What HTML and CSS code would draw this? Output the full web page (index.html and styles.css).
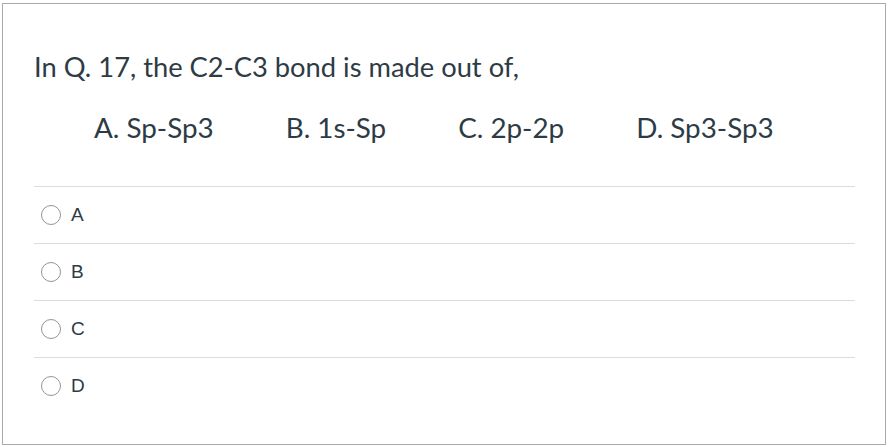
FILE: index.html
```html
<!DOCTYPE html>
<html>
<head>
<meta charset="utf-8">
<link rel="stylesheet" href="styles.css">
</head>
<body>
<div class="question">
  <div class="text">
    <p class="stem">In Q. 17, the C2-C3 bond is made out of,</p>
    <p class="choices"><span>A. Sp-Sp3</span><span>B. 1s-Sp</span><span>C. 2p-2p</span><span>D. Sp3-Sp3</span></p>
  </div>
  <div class="answers">
    <label class="answer"><span class="radio"></span><span class="lbl">A</span></label>
    <label class="answer"><span class="radio"></span><span class="lbl">B</span></label>
    <label class="answer"><span class="radio"></span><span class="lbl">C</span></label>
    <label class="answer"><span class="radio"></span><span class="lbl">D</span></label>
  </div>
</div>
</body>
</html>
```
FILE: styles.css
```css
html, body { margin: 0; padding: 0; background: #fff; }
body { padding: 3px 0 0 2px; }
.question {
  box-sizing: border-box;
  width: 884px;
  height: 442px;
  border: 1px solid #aaaaaa;
  padding: 0 30px 0 31px;
  color: #2d3b45;
}
.text { font-family: Lato, "Open Sans", sans-serif; }
.stem { margin: 0; padding-top: 45px; line-height: 36px; font-size: 27.3px; }
.choices {
  margin: 0; padding: 24px 0 0 60px; line-height: 38px; font-size: 27.8px;
  display: flex; gap: 72px;
}
.answers { margin-top: 39px; }
.answer {
  display: flex; align-items: center;
  height: 56px;
  border-top: 1px solid #dcdcdc;
  font-family: "Liberation Sans", Arial, sans-serif;
  font-size: 19px;
}
.radio {
  box-sizing: border-box;
  width: 20px; height: 20px;
  border: 1px solid #949494; border-radius: 50%;
  margin: 0 10px 0 7px;
}
.lbl { line-height: 20px; }
```
